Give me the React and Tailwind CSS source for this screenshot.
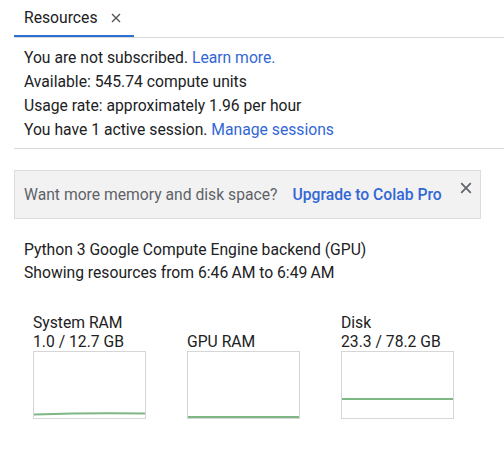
import React from 'react';

const charts = [
  { title: 'System RAM', value: '1.0 / 12.7 GB', path: 'M0 62.5 C 30 61.5, 60 60.5, 111 61.5' },
  { title: 'GPU RAM', value: null, path: 'M0 65 L 111 65' },
  { title: 'Disk', value: '23.3 / 78.2 GB', path: 'M0 47 L 111 47' },
];

function CloseGlyph({ size = 10, className = '' }) {
  return (
    <svg width={size} height={size} viewBox="0 0 10 10" className={className}>
      <path d="M1 1 L9 9 M9 1 L1 9" stroke="currentColor" strokeWidth="1.4" fill="none" />
    </svg>
  );
}

function Chart({ title, value, path }) {
  return (
    <div className="flex w-[113px] flex-col">
      <div className="leading-[19px] text-[#212121]">
        <div>{title}</div>
        {value && <div>{value}</div>}
      </div>
      <div className="h-[68px] w-[113px] border border-[#d6d6d6] bg-white">
        <svg width="111" height="66" viewBox="0 0 111 66">
          <path d={path} stroke="#7fb685" strokeWidth="2" fill="none" />
        </svg>
      </div>
    </div>
  );
}

export default function App() {
  return (
    <div className="h-[452px] w-[504px] overflow-hidden bg-white text-[15.7px] text-[#202124]" style={{ fontFamily: 'Roboto, "Liberation Sans", sans-serif' }}>
      {/* tab bar */}
      <div className="ml-[14px] flex h-[38px] border-b border-[#dadada]">
        <div className="flex w-[120px] items-center gap-[14px] border-b-2 border-[#2f6fd4] pl-[10px]">
          <span>Resources</span>
          <CloseGlyph size={10} className="text-[#555]" />
        </div>
      </div>

      {/* subscription info */}
      <div className="ml-[14px] border-b border-[#dadada] pb-[6px] pl-[10px] pt-[8px] leading-[24px]">
        <div>
          You are not subscribed. <span className="text-[#3367d6]">Learn more.</span>
        </div>
        <div>Available: 545.74 compute units</div>
        <div>Usage rate: approximately 1.96 per hour</div>
        <div>
          You have 1 active session. <span className="text-[#3367d6]">Manage sessions</span>
        </div>
      </div>

      {/* upgrade banner */}
      <div className="relative ml-[14px] mt-[21px] flex h-[49px] w-[467px] items-center border border-[#dcdcdc] bg-[#f2f2f2] pl-[9px]">
        <span className="text-[#5f6368]">Want more memory and disk space?</span>
        <span className="ml-[15px] font-medium text-[#3367d6]">Upgrade to Colab Pro</span>
        <CloseGlyph size={12} className="absolute right-[8px] top-[11px] text-[#5f6368]" />
      </div>

      {/* backend */}
      <div className="mt-[19px] pl-[24px] leading-[23px]">
        <div>Python 3 Google Compute Engine backend (GPU)</div>
        <div>Showing resources from 6:46&#8201;AM to 6:49&#8201;AM</div>
      </div>

      {/* charts */}
      <div className="mt-[29px] flex items-end gap-[41px] pl-[33px]">
        {charts.map((c) => (
          <Chart key={c.title} {...c} />
        ))}
      </div>
    </div>
  );
}
